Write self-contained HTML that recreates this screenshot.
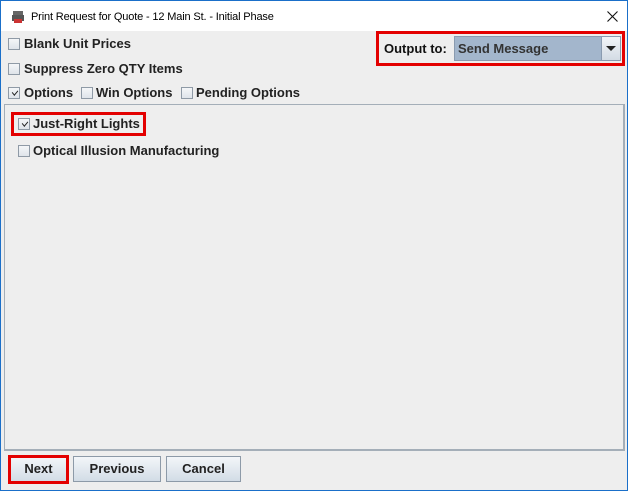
<!DOCTYPE html>
<html><head><style>
*{margin:0;padding:0;box-sizing:border-box}
body{width:628px;height:491px;background:#eeeeee;position:relative;overflow:hidden;font-family:"Liberation Sans",sans-serif;}
.win{position:absolute;left:0;top:0;width:628px;height:491px;border:1px solid #1a6fc9;border-top:1px solid #1a6fc9}
.title{position:absolute;left:1px;top:1px;width:626px;height:30px;background:#fff}
.t{position:absolute;font-size:11px;color:#000;white-space:nowrap;letter-spacing:-0.15px}
.b{position:absolute;font-size:13px;font-weight:bold;color:#222;white-space:nowrap}
.cb{position:absolute;width:12px;height:12px;border:1px solid #8f9aa6;background:linear-gradient(#f4f6f8,#dfe4ea)}
.cb.k::after{content:"";position:absolute;left:3px;top:2px;width:5px;height:3px;border-left:1.5px solid #222;border-bottom:1.5px solid #222;transform:rotate(-50deg) skewX(-10deg);}
.red{position:absolute;border:3px solid #e30000}
.panel{position:absolute;left:4px;top:104px;width:621px;height:347px;border:1px solid #a4aeb8;border-right:2px solid #a4aeb8;border-bottom:2px solid #a4aeb8}
.btn{position:absolute;height:26px;border:1px solid #8d9aa8;background:linear-gradient(#f3f6f9,#d2dce6);font-size:13px;font-weight:bold;color:#222;text-align:center;line-height:24px}
</style></head><body>
<div class="win"></div>
<div class="title"></div>
<svg style="position:absolute;left:11px;top:10px" width="14" height="14" viewBox="0 0 14 14"><rect x="2" y="1" width="10" height="5" fill="#666"/><rect x="1" y="5" width="12" height="6" fill="#555"/><rect x="3" y="9" width="8" height="4" fill="#c33"/></svg>
<div class="t" style="left:31px;top:11px">Print Request for Quote - 12 Main St. - Initial Phase</div>
<svg style="position:absolute;left:607px;top:11px" width="11" height="11" viewBox="0 0 11 11"><path d="M0.5 0.5L10.5 10.5M10.5 0.5L0.5 10.5" stroke="#111" stroke-width="1.1"/></svg>

<div class="cb" style="left:8px;top:38px"></div><div class="b" style="left:24px;top:36px">Blank Unit Prices</div>
<div class="cb" style="left:8px;top:63px"></div><div class="b" style="left:24px;top:61px">Suppress Zero QTY Items</div>
<div class="cb k" style="left:8px;top:87px"></div><div class="b" style="left:24px;top:85px">Options</div>
<div class="cb" style="left:81px;top:87px"></div><div class="b" style="left:96px;top:85px">Win Options</div>
<div class="cb" style="left:181px;top:87px"></div><div class="b" style="left:196px;top:85px">Pending Options</div>

<div class="red" style="left:376px;top:31px;width:249px;height:35px"></div>
<div class="b" style="left:384px;top:41px;color:#111">Output to:</div>
<div style="position:absolute;left:454px;top:36px;width:167px;height:25px;border:1px solid #8a9bb0;background:#a3b6cc"></div>
<div class="b" style="left:458px;top:41px;color:#333">Send Message</div>
<div style="position:absolute;left:601px;top:37px;width:19px;height:23px;border-left:1px solid #8a9bb0;background:linear-gradient(#f2f5f8,#d3dbe4)"></div>
<div style="position:absolute;left:606px;top:46px;width:0;height:0;border-left:5px solid transparent;border-right:5px solid transparent;border-top:5px solid #222"></div>

<div class="panel"></div>
<div class="red" style="left:11px;top:112px;width:135px;height:24px"></div>
<div class="cb k" style="left:18px;top:118px"></div><div class="b" style="left:33px;top:116px">Just-Right Lights</div>
<div class="cb" style="left:18px;top:145px"></div><div class="b" style="left:33px;top:143px">Optical Illusion Manufacturing</div>

<div class="btn" style="left:10px;top:456px;width:57px">Next</div>
<div class="red" style="left:8px;top:455px;width:61px;height:29px"></div>
<div class="btn" style="left:73px;top:456px;width:88px">Previous</div>
<div class="btn" style="left:166px;top:456px;width:75px">Cancel</div>
</body></html>
